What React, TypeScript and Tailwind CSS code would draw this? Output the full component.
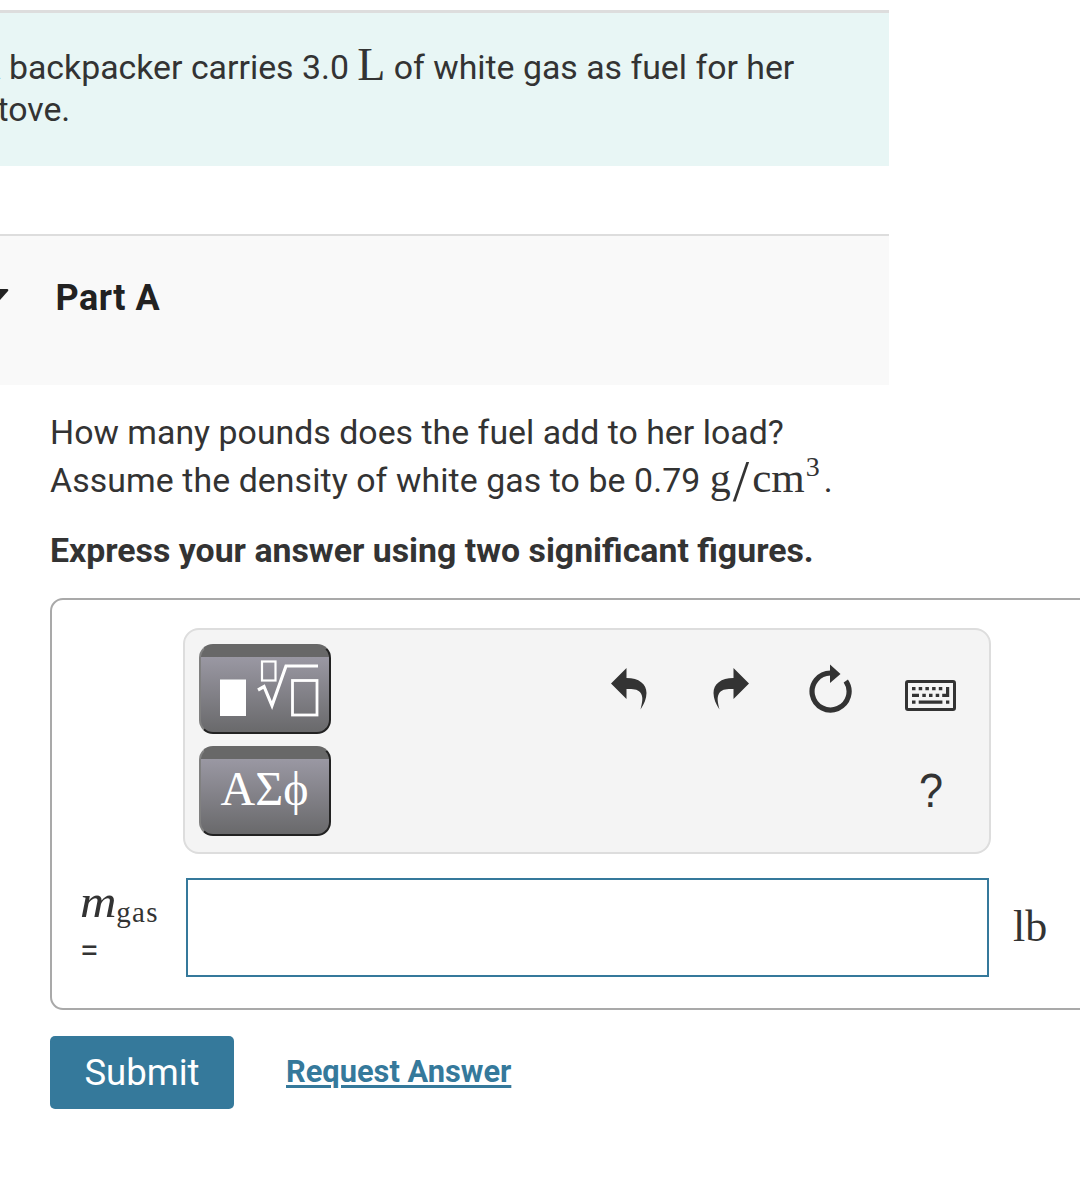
import type { ReactNode } from "react";

// Zero line height keeps the larger serif glyphs from stretching the row
function MathText({ children, className = "" }: { children: ReactNode; className?: string }) {
  return (
    <span className={`leading-[0] font-['Liberation_Serif',serif] ${className}`}>
      {children}
    </span>
  );
}

function UndoIcon() {
  return (
    <svg width="36" height="42" viewBox="0 0 36 42" fill="#333">
      <path d="M0 15.500 15.500 0v10C28 10 35.500 16 35.500 25c0 6-2.500 11-6 16.500C31 35 32.500 30 30 25.500 27.500 21 22 20.800 15.500 21v10Z" />
    </svg>
  );
}

function ResetIcon() {
  return (
    <svg width="44" height="50" viewBox="0 0 44 50">
      <path d="M21.500 9A18.500 18.500 0 1 0 36.800 17" fill="none" stroke="#333" strokeWidth="5.200" />
      <path d="M21 .5v18.500l10.500-9Z" fill="#333" />
    </svg>
  );
}

function KeyboardIcon() {
  return (
    <svg width="51" height="31" viewBox="0 0 51 31" fill="#333">
      <rect x="1.500" y="1.500" width="48" height="28" rx="1.500" fill="none" stroke="#333" strokeWidth="3" />
      <path d="M7 7h3.500v3.300H7zM13.700 7h3.500v3.300h-3.500zM20.400 7h3.500v3.300h-3.500zM27.100 7h3.500v3.300h-3.500zM33.800 7h3.500v3.300h-3.500zM41 7h3.200v10h-7v-3.200H41zM7 13.800h7V17H7zM17.300 13.800h3.500V17h-3.500zM24 13.800h3.500V17H24zM30.700 13.800h3.500V17h-3.500zM7 20.400h3.500v3.300H7zM13.700 20.400h23.700v3.300H13.700zM41 20.400h3.300v3.300H41z" />
    </svg>
  );
}

function TemplateIcon() {
  return (
    <svg className="ml-[7px]" width="100" height="58" viewBox="0 0 100 58" fill="none" stroke="#fff">
      <path d="M1 19.500h26v36.500H1z" fill="#fff" stroke="none" />
      <rect x="43" y="1.500" width="13.500" height="19" strokeWidth="2.200" />
      <path d="m39 30 6-3.500 8 19L67 6h32" strokeWidth="3.200" />
      <rect x="73.500" y="20.500" width="24.500" height="34.500" strokeWidth="2.800" />
    </svg>
  );
}

function PaletteButton({ children }: { children: ReactNode }) {
  return (
    <button className="flex h-[90px] w-[132px] items-center justify-center overflow-hidden rounded-[14px] border-2 border-t-[#686868] border-r-[#222] border-b-[#222] border-l-[#808080] bg-[linear-gradient(#686868_11px,#9a98a3_11px,#69696b_100%)] text-white">
      {children}
    </button>
  );
}

function Toolbar() {
  return (
    <div className="flex h-[226px] w-[808px] justify-between rounded-2xl border-2 border-[#ddd] bg-[#f4f4f4] p-[14px]">
      <div className="flex flex-col gap-3">
        <PaletteButton>
          <TemplateIcon />
        </PaletteButton>
        <PaletteButton>
          <MathText className="pr-px pb-[4px] text-[48px]">ΑΣϕ</MathText>
        </PaletteButton>
      </div>
      <div className="flex w-[364px] flex-col pr-[19px]">
        <div className="flex h-[90px] items-center">
          <button className="mr-[66px]">
            <UndoIcon />
          </button>
          <button className="mr-[60px] -scale-x-100">
            <UndoIcon />
          </button>
          <button className="mr-[52px]">
            <ResetIcon />
          </button>
          <button className="mt-[13px]">
            <KeyboardIcon />
          </button>
        </div>
        <button className="mt-3 origin-right scale-x-90 self-end pr-[14px] font-['Liberation_Sans',sans-serif] text-[48px] leading-[90px]">
          ?
        </button>
      </div>
    </div>
  );
}

export default function App() {
  return (
    <div className="h-[1179px] w-[1080px] overflow-hidden bg-white pt-[10px] font-['Roboto',sans-serif] text-[33.85px] leading-[42px] whitespace-nowrap text-[#333]">
      <div className="h-[156px] w-[889px] border-t-3 border-[#ddd] bg-[#e8f6f5] pt-[34px]">
        <p className="-ml-[21.5px] h-[42px]">
          A backpacker carries 3.0 <MathText className="relative top-px text-[46px]">L</MathText> of white gas as fuel for her
        </p>
        <p className="-ml-[20px]">stove.</p>
      </div>

      <div className="mt-[68px] flex h-[151px] w-[889px] items-start border-t-2 border-[#ddd] bg-[#f9f9f9] pt-[41px] text-[#222]">
        <svg className="mt-[12px] -ml-[10px]" width="19" height="14" viewBox="0 0 19 14" fill="#222">
          <path d="M1 0h16q2 0 1 2l-8 9q-1 1-2 0L0 2q-1-2 1-2Z" />
        </svg>
        <h2 className="ml-[46.5px] text-[36px] font-bold tracking-[0.5px]">Part A</h2>
      </div>

      <div className="pl-[50px]">
        <p className="mt-[27px] h-[48px] tracking-[0.02px]">How many pounds does the fuel add to her load?</p>
        <p className="h-[46px]">
          <span className="tracking-[0.09px]">Assume the density of white gas to be 0.79 </span>
          <MathText className="ml-px text-[42px]">g</MathText>
          <MathText className="relative top-[9px] ml-[2px] text-[59px]">/</MathText>
          <MathText className="ml-[3px] text-[43px]">cm</MathText>
          <MathText className="relative -top-[16px] ml-px text-[28px]">3</MathText>
          <span className="ml-[4px]">.</span>
        </p>
        <p className="mt-6 h-[42px] font-bold">Express your answer using two significant figures.</p>

        <div className="mt-[26px] flex h-[412px] w-[1080px] flex-col rounded-[13px] border-2 border-[#a9a9a9] pt-7 pl-7">
          <div className="ml-[103px]">
            <Toolbar />
          </div>
          <div className="mt-6 flex">
            <div className="w-[106px] pt-1">
              <div className="h-[47px]">
                <MathText className="relative top-[3px] mr-[3px] inline-block origin-left scale-x-110 text-[46px] italic">m</MathText>
                <MathText className="relative top-[8px] text-[29px] tracking-[1.3px]">gas</MathText>
              </div>
              <div className="pt-px text-[33.85px]">=</div>
            </div>
            <input className="h-[99px] w-[803px] border-2 border-[#35799b] bg-white outline-none" />
            <MathText className="ml-6 pt-[49px] text-[44px]">lb</MathText>
          </div>
        </div>

        <div className="mt-[26px] flex items-center">
          <button className="h-[73px] w-[184px] rounded-[5px] bg-[#35799b] text-[36.5px] text-white">Submit</button>
          <a className="mb-[2px] ml-[52px] text-[30.8px] font-bold text-[#35799b] underline decoration-[3px] underline-offset-[3px]">
            Request Answer
          </a>
        </div>
      </div>
    </div>
  );
}
